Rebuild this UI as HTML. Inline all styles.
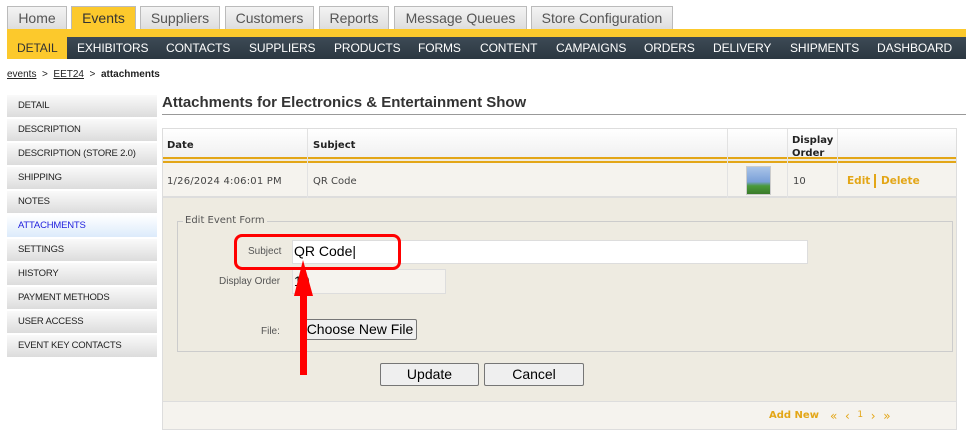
<!DOCTYPE html>
<html><head><style>
*{margin:0;padding:0;box-sizing:border-box}
body{width:966px;height:433px;background:#fff;font-family:"Liberation Sans",sans-serif;position:relative;overflow:hidden}
.a{position:absolute}
.tab{position:absolute;top:6px;height:24px;background:linear-gradient(#f4f4f4,#dcdcdc);border:1px solid #bbb;border-bottom:none;color:#555;font-size:14px;text-align:center;line-height:23px}
.nav{position:absolute;top:37px;height:22px;color:#fff;font-size:12px;line-height:22px;letter-spacing:-0.1px}
.side{position:absolute;left:7px;width:150px;height:22px;background:linear-gradient(#fafafa,#dcdcdc);font-size:9.5px;color:#222;line-height:22px;padding-left:11px;letter-spacing:-0.2px}
.ver{font-family:"DejaVu Sans",sans-serif}
.btn{position:absolute;background:#efefef;border:1px solid #767676;border-radius:2px;font-size:14px;text-align:center;color:#000}
</style></head><body>
<div class="tab" style="left:7px;width:60px">Home</div>
<div class="tab" style="left:71px;width:65px;background:#fcc92c;color:#333">Events</div>
<div class="tab" style="left:140px;width:80px">Suppliers</div>
<div class="tab" style="left:225px;width:89px">Customers</div>
<div class="tab" style="left:319px;width:70px">Reports</div>
<div class="tab" style="left:394px;width:133px">Message Queues</div>
<div class="tab" style="left:531px;width:142px">Store Configuration</div>
<div class="a" style="left:7px;top:29px;width:959px;height:8px;background:#fcc92c"></div>
<div class="a" style="left:7px;top:37px;width:959px;height:22px;background:linear-gradient(#3d4a55,#2b3741)"></div>
<div class="a" style="left:7px;top:37px;width:60px;height:22px;background:#fcc92c"></div>
<div class="nav" style="left:17px;color:#333">DETAIL</div>
<div class="nav" style="left:77px">EXHIBITORS</div>
<div class="nav" style="left:166px">CONTACTS</div>
<div class="nav" style="left:249px">SUPPLIERS</div>
<div class="nav" style="left:334px">PRODUCTS</div>
<div class="nav" style="left:418px">FORMS</div>
<div class="nav" style="left:480px">CONTENT</div>
<div class="nav" style="left:556px">CAMPAIGNS</div>
<div class="nav" style="left:644px">ORDERS</div>
<div class="nav" style="left:713px">DELIVERY</div>
<div class="nav" style="left:790px">SHIPMENTS</div>
<div class="nav" style="left:877px">DASHBOARD</div>
<div class="a" style="left:7px;top:69px;font-size:10px;color:#222"><u>events</u> &nbsp;&gt;&nbsp; <u>EET24</u> &nbsp;&gt;&nbsp; <b>attachments</b></div>
<div class="side" style="top:95px">DETAIL</div>
<div class="side" style="top:119px">DESCRIPTION</div>
<div class="side" style="top:143px">DESCRIPTION (STORE 2.0)</div>
<div class="side" style="top:167px">SHIPPING</div>
<div class="side" style="top:191px">NOTES</div>
<div class="side" style="top:215px;background:linear-gradient(#fff,#dcebfb);color:#2222dd">ATTACHMENTS</div>
<div class="side" style="top:239px">SETTINGS</div>
<div class="side" style="top:263px">HISTORY</div>
<div class="side" style="top:287px">PAYMENT METHODS</div>
<div class="side" style="top:311px">USER ACCESS</div>
<div class="side" style="top:335px">EVENT KEY CONTACTS</div>
<div class="a" style="left:162px;top:94px;font-size:15px;font-weight:bold;color:#333">Attachments for Electronics &amp; Entertainment Show</div>
<div class="a" style="left:162px;top:114px;width:804px;height:1px;background:#999"></div>
<div class="a" style="left:162px;top:128px;width:795px;height:302px;background:#eeebe1;border:1px solid #ddd"></div>
<div class="a" style="left:163px;top:129px;width:793px;height:29px;background:linear-gradient(#fff,#f0f0f0)"></div>
<div class="a" style="left:163px;top:157px;width:793px;height:2px;background:#e3a617"></div>
<div class="a" style="left:163px;top:161px;width:793px;height:2px;background:#e3a617"></div>
<div class="a" style="left:163px;top:163px;width:793px;height:35px;background:#f5f3ee;border-bottom:2px solid #ddd"></div>
<div class="a" style="left:307px;top:129px;width:1px;height:69px;background:#e2e2e2"></div>
<div class="a" style="left:727px;top:129px;width:1px;height:69px;background:#e2e2e2"></div>
<div class="a" style="left:787px;top:129px;width:1px;height:69px;background:#e2e2e2"></div>
<div class="a" style="left:837px;top:129px;width:1px;height:69px;background:#e2e2e2"></div>
<div class="a ver" style="left:167px;top:140px;font-size:10px;font-weight:bold;color:#222">Date</div>
<div class="a ver" style="left:313px;top:140px;font-size:10px;font-weight:bold;color:#222">Subject</div>
<div class="a ver" style="left:792px;top:134px;font-size:10px;font-weight:bold;color:#222;line-height:13px">Display<br>Order</div>
<div class="a ver" style="left:167px;top:176px;font-size:10px;color:#444;letter-spacing:0.2px">1/26/2024 4:06:01 PM</div>
<div class="a ver" style="left:313px;top:176px;font-size:10px;color:#444">QR Code</div>
<div class="a" style="left:746px;top:166px;width:25px;height:29px;background:linear-gradient(#aac4e8 0,#7aa0d8 55%,#4a9a3a 70%,#3a7a2a);border:1px solid #ccc"></div>
<div class="a ver" style="left:793px;top:176px;font-size:10px;color:#444">10</div>
<div class="a ver" style="left:847px;top:175px;font-size:10.5px;font-weight:bold;color:#e3a617">Edit</div>
<div class="a" style="left:874px;top:174px;width:2px;height:14px;background:#e3a617"></div>
<div class="a ver" style="left:881px;top:175px;font-size:10.5px;font-weight:bold;color:#e3a617">Delete</div>
<div class="a" style="left:177px;top:221px;width:776px;height:131px;border:1px solid #ccc"></div>
<div class="a ver" style="left:183px;top:215px;font-size:10px;color:#555;background:#eeebe1;padding:0 2px">Edit Event Form</div>
<div class="a" style="left:248px;top:246px;font-size:10px;color:#555">Subject</div>
<div class="a" style="left:292px;top:240px;width:516px;height:24px;background:#fff;border:1px solid #ddd;font-size:14px;padding:2px 0 0 1px">QR Code|</div>
<div class="a" style="left:219px;top:276px;font-size:10px;color:#555">Display Order</div>
<div class="a" style="left:292px;top:269px;width:154px;height:25px;background:#f5f3ee;border:1px solid #ddd;font-size:14px;padding:3px 0 0 1px">10</div>
<div class="a" style="left:261px;top:326px;font-size:10px;color:#555">File:</div>
<div class="btn" style="left:303px;top:319px;width:114px;height:21px;line-height:19px">Choose New File</div>
<div class="btn" style="left:380px;top:363px;width:99px;height:23px;line-height:21px">Update</div>
<div class="btn" style="left:484px;top:363px;width:100px;height:23px;line-height:21px">Cancel</div>
<div class="a" style="left:163px;top:401px;width:793px;height:28px;background:#f5f3ee;border-top:1px solid #ddd"></div>
<div class="a ver" style="left:769px;top:410px;font-size:10px;font-weight:bold;color:#e3a617">Add New</div>
<div class="a ver" style="left:830px;top:409px;font-size:12px;color:#e3a617">«&nbsp;&nbsp;‹&nbsp;&nbsp;<span style="font-size:9px;vertical-align:3px">1</span>&nbsp;&nbsp;›&nbsp;&nbsp;»</div>
<div class="a" style="left:234px;top:234px;width:167px;height:36px;border:3px solid #f00;border-radius:8px"></div>
<svg class="a" style="left:290px;top:258px" width="30" height="120"><polygon points="13,2 4,38 10,38 10,117 17,117 17,38 23,38" fill="#f00"/></svg>
</body></html>
